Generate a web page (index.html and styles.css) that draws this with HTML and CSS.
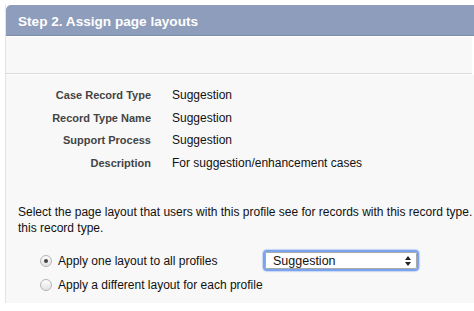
FILE: index.html
```html
<!DOCTYPE html>
<html lang="en">
<head>
<meta charset="UTF-8">
<title>Assign page layouts</title>

<link rel="stylesheet" href="styles.css">
</head>

<body>

<div class="panel">
    <div class="stepHeader">Step 2. Assign page layouts</div>

    <div class="band"></div>

    <div class="content">
        <div class="details">
            <div class="label">Case Record Type</div>
            <div class="value">Suggestion</div>

            <div class="label">Record Type Name</div>
            <div class="value">Suggestion</div>

            <div class="label">Support Process</div>
            <div class="value">Suggestion</div>

            <div class="label">Description</div>
            <div class="value">For suggestion/enhancement cases</div>
        </div>

        <p class="intro">Select the page layout that users with this profile see for records with this record type. All users with this profile will see the selected layout for<br>this record type.</p>

        <div class="option">
            <span class="radio checked"></span>
            <span class="optLabel">Apply one layout to all profiles</span>
            <div class="select">
                <span>Suggestion</span>
                <span class="arrows">
                    <svg width="6" height="10" viewBox="0 0 6 10"><path d="M3 0 L6 4 L0 4 Z M0 6 L6 6 L3 10 Z" fill="#222"/></svg>
                </span>
            </div>
        </div>

        <div class="option">
            <span class="radio"></span>
            <span class="optLabel">Apply a different layout for each profile</span>
        </div>
    </div>
</div>

</body>
</html>
```

FILE: styles.css
```css
body{
    margin:0;
    background:white;
    font-family:"Liberation Sans", Arial, sans-serif;
    overflow:hidden;
    width:474px;
    height:311px;
}

.panel{
    margin:5px 0 0 5px;
    width:700px;
    border-left:1px solid #e3e3e3;
}

.stepHeader{
    height:31px;
    line-height:33px;
    background:#8e9dbb;
    border-bottom:1px solid #7f8dab;
    border-top-left-radius:5px;
    color:white;
    font-weight:bold;
    font-size:13.6px;
    padding-left:12px;
    box-sizing:border-box;
}

.band{
    width:466px;
    height:37px;
    background:#f8f8f8;
    border-bottom:1px solid #d9d9d9;
    box-sizing:border-box;
    margin-top:1px;
}

.content{
    background:#f8f8f8;
    margin-top:1px;
    padding:9px 0 6px 0;
}

.details{
    display:grid;
    grid-template-columns:145px 1fr;
    column-gap:21px;
    line-height:22.7px;
}

.label{
    text-align:right;
    font-weight:bold;
    font-size:11px;
    color:#444;
}

.value{
    font-size:12px;
    color:#111;
}

.intro{
    margin:29px 0 13px 12px;
    font-size:12px;
    line-height:16px;
    color:#111;
    white-space:nowrap;
}

.option{
    display:flex;
    align-items:center;
    height:24px;
    padding-left:34px;
    font-size:12px;
    color:#111;
}

.radio{
    width:12px;
    height:12px;
    border-radius:50%;
    border:1px solid #b5b5b5;
    background:linear-gradient(#fdfdfd, #e2e2e2);
    box-sizing:border-box;
    margin-right:6px;
    position:relative;
}

.radio.checked::after{
    content:"";
    position:absolute;
    left:3px;
    top:3px;
    width:4px;
    height:4px;
    border-radius:50%;
    background:#444;
}

.optLabel{
    width:205px;
}

.select{
    width:156px;
    height:21px;
    box-sizing:border-box;
    border:2px solid #7ba3ec;
    border-radius:4px;
    background:white;
    box-shadow:inset 0 0 0 1px #a9a9a9, 0 0 1px 1px #c5d6f5;
    display:flex;
    align-items:center;
    justify-content:space-between;
    padding:0 6px 0 8px;
    font-size:12.5px;
    color:#111;
}

.arrows{
    display:flex;
}
```
